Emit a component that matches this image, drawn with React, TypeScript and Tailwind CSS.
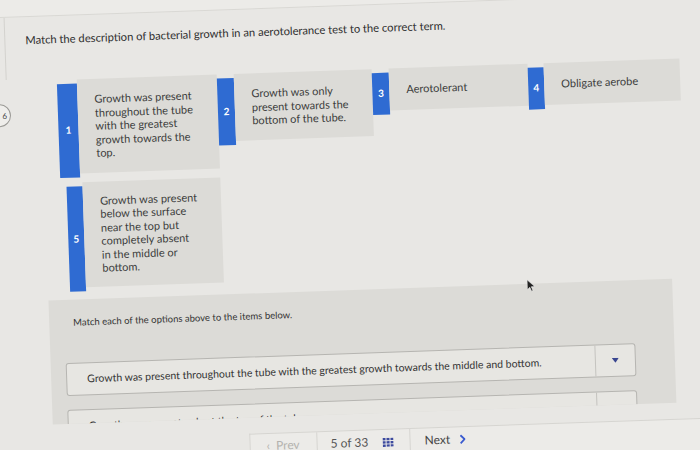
import React from "react";

type CardProps = {
  n: string;
  w: string;
  bw: string;
  py: string;
  lines: string[];
};

function Card({ n, w, bw, py, lines }: CardProps) {
  return (
    <div className={`flex items-stretch shrink-0 ${w}`}>
      <div
        className={`${bw} shrink-0 mt-[4px] -mb-[4px] bg-[#2f6bd2] flex items-center justify-center text-white text-[10px] font-bold`}
      >
        {n}
      </div>
      <div className={`flex-1 bg-[#dcdbd7] pl-[17px] pr-[6px] ${py} text-[11px] leading-[13.5px] text-[#3b3b3b]`}>
        {lines.map((l, i) => (
          <div key={i} className="whitespace-nowrap">
            {l}
          </div>
        ))}
      </div>
    </div>
  );
}

function Caret() {
  return (
    <svg width="7" height="5" viewBox="0 0 7 5">
      <path d="M0 0 L7 0 L3.5 5 Z" fill="#3a4690" />
    </svg>
  );
}

export default function App() {
  return (
    <div className="w-[700px] h-[450px] overflow-hidden bg-[#e8e7e4] font-['Lato',sans-serif] text-[#3a3a3a]">
      <div className="relative w-[740px] h-[490px] -ml-[20px] -mt-[20px] p-[20px] rotate-[-2deg] bg-[#e8e7e4] flex flex-col">
        <div className="-mx-[20px] -mt-[20px] h-[26px] bg-[#ecebe8] border-b border-[#d9d8d4] shrink-0" />
        <div className="ml-[11px] h-[62px] shrink-0 border-l border-[#d3d2ce] pl-[20px] pt-[16px] text-[11.2px] leading-[14px] text-[#2e2e2e]">
          Match the description of bacterial growth in an aerotolerance test to the correct term.
        </div>

        <div className="mt-[2px] pl-[62px] flex items-start shrink-0">
          <Card
            n="1"
            w="w-[160px]"
            bw="w-[20px]"
            py="py-[13px]"
            lines={["Growth was present", "throughout the tube", "with the greatest", "growth towards the", "top."]}
          />
          <Card
            n="2"
            w="w-[155px]"
            bw="w-[17px]"
            py="py-[13px]"
            lines={["Growth was only", "present towards the", "bottom of the tube."]}
          />
          <Card n="3" w="w-[156px]" bw="w-[17px]" py="py-[14px]" lines={["Aerotolerant"]} />
          <Card n="4" w="w-[152px]" bw="w-[16px]" py="py-[14px]" lines={["Obligate aerobe"]} />
        </div>

        <div className="mt-[9px] pl-[68px] flex items-start shrink-0">
          <Card
            n="5"
            w="w-[154px]"
            bw="w-[16px]"
            py="py-[12px]"
            lines={[
              "Growth was present",
              "below the surface",
              "near the top but",
              "completely absent",
              "in the middle or",
              "bottom.",
            ]}
          />
        </div>

        <div className="mt-[12px] ml-[46px] w-[624px] h-[124px] shrink-0 bg-[#dcdbd7] overflow-hidden flex flex-col">
          <div className="ml-[24px] mt-[17px] text-[9.5px] leading-[12px] text-[#333]">
            Match each of the options above to the items below.
          </div>
          <div className="ml-[15px] mt-[34px] w-[570px] h-[33px] shrink-0 border border-[#b6b5b1] rounded-[3px] bg-[#e7e6e2] flex">
            <div className="flex-1 flex items-center pl-[20px] pt-[2px] text-[10.5px] text-[#333] whitespace-nowrap">
              Growth was present throughout the tube with the greatest growth towards the middle and bottom.
            </div>
            <div className="w-[40px] border-l border-[#c4c3bf] flex items-center justify-center">
              <Caret />
            </div>
          </div>
          <div className="ml-[15px] mt-[14px] w-[570px] h-[33px] shrink-0 border border-[#b6b5b1] rounded-[3px] bg-[#e7e6e2] flex">
            <div className="flex-1 flex items-center pl-[20px] pt-[2px] text-[10.5px] text-[#333] whitespace-nowrap">
              Growth was present only at the top of the tube.
            </div>
            <div className="w-[40px] border-l border-[#c4c3bf] flex items-center justify-center">
              <Caret />
            </div>
          </div>
        </div>

        <div className="mt-[16px] ml-[242px] flex h-[40px] shrink-0 bg-[#ecebe8] border-t border-x border-[#d6d5d1] text-[12px] leading-[12px]">
          <div className="w-[67px] border-r border-[#d6d5d1] pt-[6px] pl-[16px] text-[#b3b2ae] flex gap-[6px]">
            <span>‹</span>
            <span>Prev</span>
          </div>
          <div className="w-[93px] border-r border-[#d6d5d1] pt-[6px] pl-[13px] flex items-start gap-[14px] text-[#555]">
            <span>5 of 33</span>
            <svg width="11" height="9" viewBox="0 0 11 9" className="mt-[2px]">
              {[0, 4, 8].map((x) =>
                [0, 3.3, 6.6].map((y) => (
                  <rect key={`${x}-${y}`} x={x} y={y} width="3" height="2.4" fill="#3c4a9e" />
                ))
              )}
            </svg>
          </div>
          <div className="w-[67px] pt-[6px] pl-[14px] flex items-start gap-[9px] text-[#444]">
            <span>Next</span>
            <svg width="6" height="10" viewBox="0 0 6 10" className="mt-[1px]">
              <path d="M1 1 L5 5 L1 9" stroke="#3a5bd0" strokeWidth="1.8" fill="none" />
            </svg>
          </div>
        </div>

        <div className="absolute left-[12px] top-[112px] w-[23px] h-[23px] rounded-full border border-[#9a9995] bg-[#efeeeb] flex items-center justify-end pr-[3px] text-[8px] text-[#444]">
          6
        </div>
        <svg className="absolute left-[545px] top-[306px]" width="8" height="12" viewBox="0 0 8 12">
          <path d="M0 0 L0 10 L2.5 7.5 L4.2 11.5 L5.6 10.8 L4 7 L7.5 7 Z" fill="#222" stroke="#fff" strokeWidth="0.5" />
        </svg>
      </div>
    </div>
  );
}
